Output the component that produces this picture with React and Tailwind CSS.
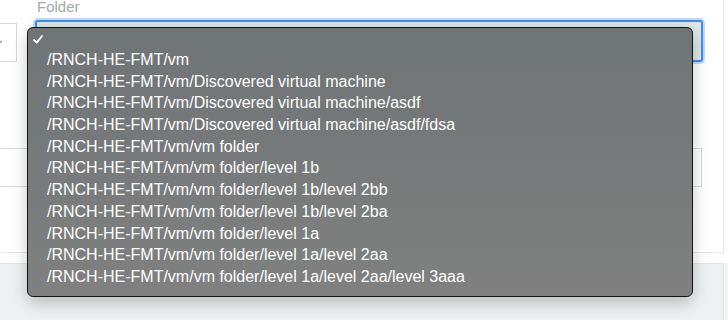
import { ChevronDown } from "lucide-react";

const folders = [
  "/RNCH-HE-FMT/vm",
  "/RNCH-HE-FMT/vm/Discovered virtual machine",
  "/RNCH-HE-FMT/vm/Discovered virtual machine/asdf",
  "/RNCH-HE-FMT/vm/Discovered virtual machine/asdf/fdsa",
  "/RNCH-HE-FMT/vm/vm folder",
  "/RNCH-HE-FMT/vm/vm folder/level 1b",
  "/RNCH-HE-FMT/vm/vm folder/level 1b/level 2bb",
  "/RNCH-HE-FMT/vm/vm folder/level 1b/level 2ba",
  "/RNCH-HE-FMT/vm/vm folder/level 1a",
  "/RNCH-HE-FMT/vm/vm folder/level 1a/level 2aa",
  "/RNCH-HE-FMT/vm/vm folder/level 1a/level 2aa/level 3aaa",
];

const Check = () => (
  <svg width="10" height="9" viewBox="0 0 10 9" className="block">
    <path d="M1 5 L3.8 7.6 L9 1" fill="none" stroke="white" strokeWidth="1.8" strokeLinecap="round" strokeLinejoin="round" />
  </svg>
);

export default function App() {
  return (
    <div className="relative w-[728px] h-[320px] overflow-hidden bg-white font-['Liberation_Sans',Arial,sans-serif]">
      <div className="h-[253px] w-[724px] border-r border-b border-[#e3e8e8] bg-white">
        <div className="flex">
          <div className="mt-[23px] h-[39px] w-[17px] border border-l-0 border-[#d3dada] bg-white flex items-center overflow-hidden">
            <ChevronDown className="w-[14px] h-[14px] -ml-[9px] text-[#8a9394]" strokeWidth={2} />
          </div>
          <div className="ml-[18px] flex flex-col">
            <div className="h-[20px] -mt-[3px] text-[15px] leading-[20px] text-[#a3a9aa] pl-[2px]">Folder</div>
            <div className="mt-[3px] h-[42px] w-[668px] rounded-[3px] border-2 border-[#3d8ef0] bg-[#dde7e7] shadow-[0_0_0_2px_rgba(120,170,245,0.45)]"></div>
          </div>
        </div>
        <div className="mt-[86px] h-[39px] w-[702px] border border-l-0 border-[#d3dada] bg-white"></div>
      </div>
      <div className="h-[67px] bg-[#f4f6f6]">
        <div className="mt-[10px] h-[57px] w-[724px] border-t border-r border-[#e1e6e6] bg-[#eef1f1]"></div>
      </div>

      <div className="absolute left-[27px] top-[27px] w-[666px] h-[270px] rounded-[6px] border border-[#141414] bg-gradient-to-b from-[#6f7475] to-[#808080] shadow-[0_6px_16px_rgba(0,0,0,0.22)] pt-[2px]">
        <div className="h-[19px] flex items-center pl-[5px]">
          <Check />
        </div>
        {folders.map((f, i) => (
          <div key={i} className="h-[21.7px] leading-[21.7px] pl-[19px] text-[16px] text-white whitespace-nowrap">
            {f}
          </div>
        ))}
      </div>
    </div>
  );
}
